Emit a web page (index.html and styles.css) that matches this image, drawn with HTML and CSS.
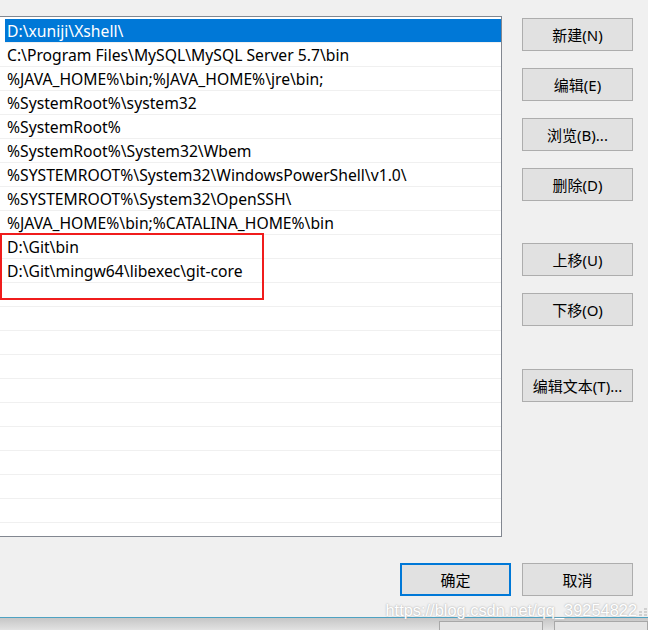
FILE: index.html
```html
<!DOCTYPE html>
<html lang="zh-CN">
<head>
    <meta charset="UTF-8">
    <meta name="viewport" content="width=device-width, initial-scale=1.0">
    <title>编辑环境变量</title>
    <link rel="stylesheet" href="styles.css">
</head>
<body>
    <div class="dialog">
        <div class="main">
            <div class="list">
                <div class="row selected">D:\xuniji\Xshell\</div>
                <div class="row">C:\Program Files\MySQL\MySQL Server 5.7\bin</div>
                <div class="row">%JAVA_HOME%\bin;%JAVA_HOME%\jre\bin;</div>
                <div class="row">%SystemRoot%\system32</div>
                <div class="row">%SystemRoot%</div>
                <div class="row">%SystemRoot%\System32\Wbem</div>
                <div class="row">%SYSTEMROOT%\System32\WindowsPowerShell\v1.0\</div>
                <div class="row">%SYSTEMROOT%\System32\OpenSSH\</div>
                <div class="row">%JAVA_HOME%\bin;%CATALINA_HOME%\bin</div>
                <div class="row">D:\Git\bin</div>
                <div class="row">D:\Git\mingw64\libexec\git-core</div>
                <div class="row"></div>
                <div class="row"></div>
                <div class="row"></div>
                <div class="row"></div>
                <div class="row"></div>
                <div class="row"></div>
                <div class="row"></div>
                <div class="row"></div>
                <div class="row"></div>
                <div class="row"></div>
                <div class="row"></div>
                <div class="highlight"></div>
            </div>

            <div class="side">
                <button class="btn first">新建(N)</button>
                <button class="btn">编辑(E)</button>
                <button class="btn">浏览(B)...</button>
                <button class="btn">删除(D)</button>
                <button class="btn move">上移(U)</button>
                <button class="btn">下移(O)</button>
                <button class="btn text">编辑文本(T)...</button>
            </div>
        </div>

        <div class="footer">
            <button class="btn ok">确定</button>
            <button class="btn">取消</button>
        </div>
    </div>

    <div class="strip">
        <div class="strip-btn"></div>
        <div class="strip-btn wide"></div>
    </div>

    <div class="watermark">https://blog.csdn.net/qq_39254822<svg width="8" height="8" viewBox="0 0 8 8"><rect x="5" y="0" width="3" height="2" fill="#d0d0d0"/><rect x="0" y="3" width="3" height="2" fill="#d0d0d0"/><rect x="5" y="3" width="3" height="2" fill="#d0d0d0"/><rect x="0" y="6" width="3" height="2" fill="#d0d0d0"/><rect x="5" y="6" width="3" height="2" fill="#d0d0d0"/></svg></div>
</body>
</html>
```

FILE: styles.css
```css
body {
    margin: 0;
    width: 648px;
    height: 630px;
    overflow: hidden;
    position: relative;
    background-color: #f0f0f0;
    font-family: "Noto Sans", "Noto Sans CJK SC", sans-serif;
    font-size: 15px;
    color: #000;
}
.dialog {
    padding-top: 16px;
}
.main {
    display: flex;
    gap: 20px;
}
.list {
    position: relative;
    width: 502px;
    height: 521px;
    box-sizing: border-box;
    border: 1px solid #828790;
    border-left: 0px;
    padding-top: 2px;
    background-color: #fff;
    overflow: hidden;
    font-size: 15.7px;
}
.row {
    height: 24px;
    line-height: 23px;
    padding-top: 1px;
    padding-left: 7px;
    box-sizing: border-box;
    border-bottom: 1px solid #f0f0f0;
    white-space: nowrap;
}
.row.selected {
    margin-left: 5px;
    padding-left: 2px;
    background-color: #0078d7;
    color: #fff;
}
.highlight {
    position: absolute;
    left: 0px;
    top: 216px;
    width: 264px;
    height: 67px;
    box-sizing: border-box;
    border: 2px solid #f01c1c;
}
.side {
    display: flex;
    flex-direction: column;
    width: 111px;
}
.btn {
    width: 111px;
    height: 33px;
    padding: 0px;
    margin-top: 17px;
    background-color: #e1e1e1;
    border: 1px solid #adadad;
    font-family: inherit;
    font-size: 15px;
    color: #000;
}
.btn.first {
    margin-top: 2px;
}
.btn.move {
    margin-top: 42px;
}
.btn.text {
    margin-top: 43px;
}
.footer {
    display: flex;
    justify-content: flex-end;
    gap: 11px;
    padding-right: 15px;
    margin-top: 26px;
}
.footer .btn {
    margin-top: 0px;
}
.btn.ok {
    border: 2px solid #0078d7;
}
.strip {
    margin-top: 21px;
    height: 13px;
    border-top: 1px solid #4ea2c2;
    background: linear-gradient(#c6c6c6, #e2e2e2);
    display: flex;
    gap: 11px;
    padding-left: 439px;
    padding-top: 3px;
    box-sizing: border-box;
}
.strip-btn {
    width: 110px;
    height: 20px;
    box-sizing: border-box;
    border: 1px solid #a8a8a8;
    background-color: #e4e4e4;
}
.strip-btn.wide {
    width: 100px;
}
.watermark {
    position: absolute;
    right: 1px;
    top: 601px;
    display: flex;
    align-items: flex-end;
    gap: 2px;
    font-family: "Liberation Sans", sans-serif;
    font-size: 16.4px;
    color: #fff;
    text-shadow: 0px 0px 2px #9a9a9a;
}
.watermark svg {
    margin-bottom: 4px;
}
```
